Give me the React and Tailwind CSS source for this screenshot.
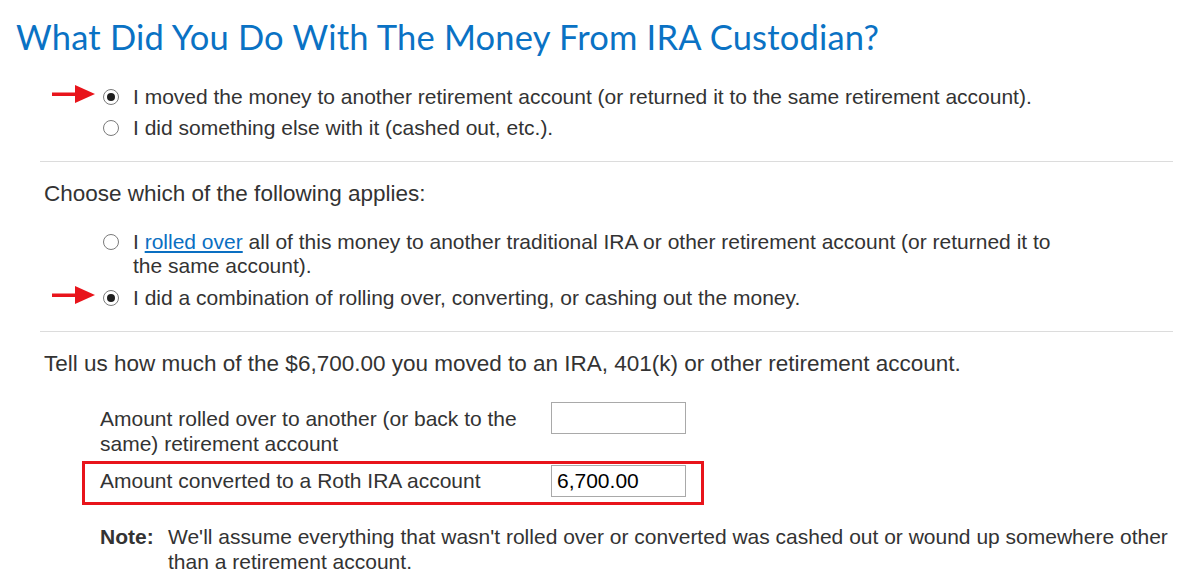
import React from 'react';

const Arrow = () => (
  <svg width="43" height="20" viewBox="0 0 43 20" className="block mb-[7px]">
    <rect x="0" y="8.5" width="25" height="3.5" fill="#e8141b" />
    <polygon points="23,1 43,10 23,19" fill="#e8141b" />
  </svg>
);

const Radio = ({ checked }) => (
  <span className="w-[16px] h-[16px] rounded-full border border-[#7a7a7a] bg-white flex items-center justify-center shrink-0">
    {checked && <span className="w-[8px] h-[8px] rounded-full bg-[#1e1e1e]" />}
  </span>
);

const Option = ({ checked, arrow, children }) => (
  <div className="flex items-start">
    <div className="w-[55px] shrink-0 flex justify-end pr-[8px] h-[24px] items-center">
      {arrow && <Arrow />}
    </div>
    <div className="h-[24px] flex items-center shrink-0">
      <Radio checked={checked} />
    </div>
    <div className="pl-[14px] leading-[24px] w-[944px]">{children}</div>
  </div>
);

export default function App() {
  return (
    <div className="w-[1179px] h-[587px] bg-white overflow-hidden text-[#333] font-['Liberation_Sans',Arial,sans-serif]">
      <h1 className="pl-[16px] pt-[17px] text-[34.5px] leading-[40px] text-[#0a72c4] font-['Lato',sans-serif] tracking-[0.2px] whitespace-nowrap">
        What Did You Do With The Money From IRA Custodian?
      </h1>

      <div className="mt-[28px] pl-[48px] text-[21px] space-y-[7px]">
        <Option checked arrow>I moved the money to another retirement account (or returned it to the same retirement account).</Option>
        <Option>I did something else with it (cashed out, etc.).</Option>
      </div>

      <div className="ml-[40px] mr-[6px] mt-[21px] border-t border-[#dcdcdc]" />

      <p className="pl-[44px] mt-[18px] text-[22.5px] leading-[28px]">Choose which of the following applies:</p>

      <div className="mt-[22px] pl-[48px] text-[21px] space-y-[8px]">
        <Option>
          I <a className="text-[#0a6fc2] underline">rolled over</a> all of this money to another traditional IRA or other retirement account (or returned it to the same account).
        </Option>
        <Option checked arrow>I did a combination of rolling over, converting, or cashing out the money.</Option>
      </div>

      <div className="ml-[40px] mr-[6px] mt-[21px] border-t border-[#dcdcdc]" />

      <p className="pl-[44px] mt-[18px] text-[22.5px] leading-[28px] whitespace-nowrap">
        Tell us how much of the $6,700.00 you moved to an IRA, 401(k) or other retirement account.
      </p>

      <div className="mt-[24px] pl-[100px] text-[21px] w-[700px]">
        <div className="flex items-start">
          <div className="w-[451px] leading-[25px] pr-[20px] mt-[4px]">
            Amount rolled over to another (or back to the same) retirement account
          </div>
          <input className="w-[135px] h-[32px] border border-[#a9a9a9] bg-white px-[5px] text-[21px] outline-none" />
        </div>
      </div>

      <div className="ml-[82px] mt-[5px] w-[622px] h-[44px] border-[3px] border-[#e8141b] flex items-start pt-[1px] pl-[15px] text-[21px]">
        <div className="w-[451px] leading-[32px]">Amount converted to a Roth IRA account</div>
        <input
          readOnly
          value="6,700.00"
          className="w-[135px] h-[32px] border border-[#a9a9a9] bg-white px-[5px] text-[21px] text-black outline-none"
        />
      </div>

      <div className="mt-[19px] pl-[100px] pr-[4px] flex text-[21px] leading-[25px]">
        <span className="w-[68px] shrink-0 font-bold">Note:</span>
        <span>We'll assume everything that wasn't rolled over or converted was cashed out or wound up somewhere other than a retirement account.</span>
      </div>
    </div>
  );
}
